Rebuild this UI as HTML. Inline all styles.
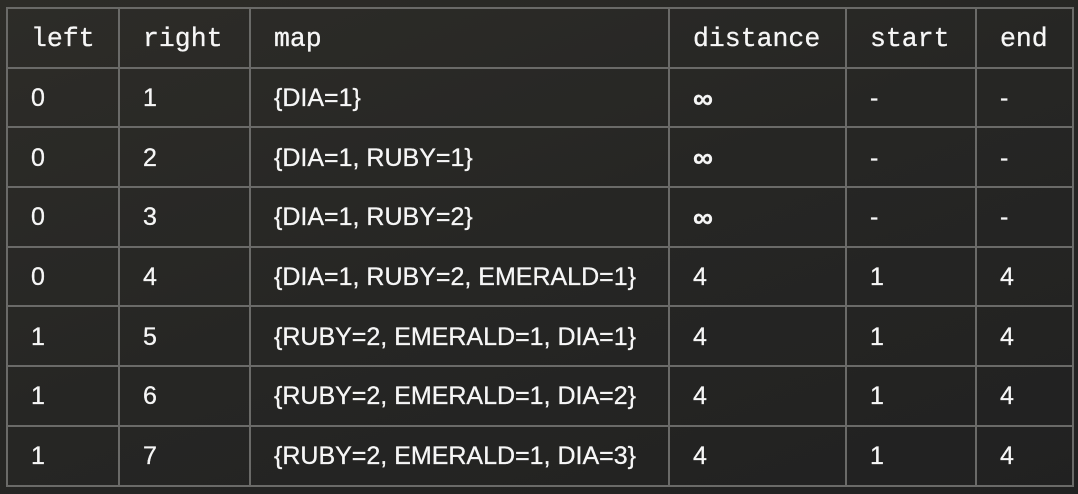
<!DOCTYPE html>
<html><head><style>
html,body{margin:0;padding:0;}
body{width:1078px;height:494px;background:linear-gradient(160deg,#2d2c28 0%,#262624 50%,#212121 100%);overflow:hidden;position:relative;}
table{position:absolute;left:6px;top:7px;border-collapse:collapse;color:#f6f6f6;}
td,th{border:2px solid #6a6a68;height:57.7px;padding:2px 0 0 23px;box-sizing:border-box;text-align:left;font-family:"Liberation Sans",sans-serif;font-size:25px;font-weight:normal;white-space:nowrap;-webkit-text-stroke:0.3px #f6f6f6;}
td{height:59.7px;}
th{font-family:"Liberation Mono",monospace;font-size:26.5px;height:59.7px;}
.inf{font-size:28px;font-weight:bold;}
</style></head><body>
<table>
<colgroup><col style="width:112px"><col style="width:131px"><col style="width:419px"><col style="width:177px"><col style="width:130px"><col style="width:97px"></colgroup>
<tr><th>left</th><th>right</th><th>map</th><th>distance</th><th>start</th><th>end</th></tr>
<tr><td>0</td><td>1</td><td>{DIA=1}</td><td class="inf">∞</td><td>-</td><td>-</td></tr>
<tr><td>0</td><td>2</td><td>{DIA=1, RUBY=1}</td><td class="inf">∞</td><td>-</td><td>-</td></tr>
<tr><td>0</td><td>3</td><td>{DIA=1, RUBY=2}</td><td class="inf">∞</td><td>-</td><td>-</td></tr>
<tr><td>0</td><td>4</td><td>{DIA=1, RUBY=2, EMERALD=1}</td><td>4</td><td>1</td><td>4</td></tr>
<tr><td>1</td><td>5</td><td>{RUBY=2, EMERALD=1, DIA=1}</td><td>4</td><td>1</td><td>4</td></tr>
<tr><td>1</td><td>6</td><td>{RUBY=2, EMERALD=1, DIA=2}</td><td>4</td><td>1</td><td>4</td></tr>
<tr><td>1</td><td>7</td><td>{RUBY=2, EMERALD=1, DIA=3}</td><td>4</td><td>1</td><td>4</td></tr>
</table>
</body></html>
